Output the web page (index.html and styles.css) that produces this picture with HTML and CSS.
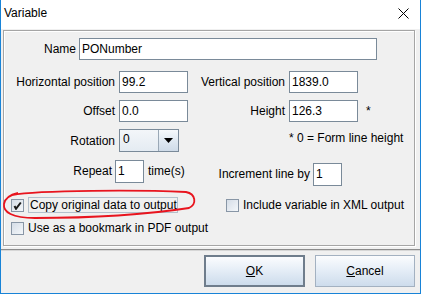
FILE: index.html
```html
<!DOCTYPE html>
<html>
<head>
<meta charset="utf-8">
<link rel="stylesheet" href="styles.css">
</head>
<body>
<div class="window">
  <div class="titlebar">
    <span class="title">Variable</span>
    <svg class="close" width="11" height="11" viewBox="0 0 11 11"><path d="M0.5 0.5 L10.5 10.5 M10.5 0.5 L0.5 10.5" stroke="#000" stroke-width="1" fill="none"/></svg>
  </div>
  <div class="panel">
    <div class="row r1">
      <span class="lbl w-name">Name</span>
      <div class="field f-name">PONumber</div>
    </div>
    <div class="row r2">
      <span class="lbl w1">Horizontal position</span>
      <div class="field f-num">99.2</div>
      <span class="lbl w2">Vertical position</span>
      <div class="field f-num">1839.0</div>
    </div>
    <div class="row r3">
      <span class="lbl w1">Offset</span>
      <div class="field f-num">0.0</div>
      <span class="lbl w2">Height</span>
      <div class="field f-num">126.3</div>
      <span class="star">*</span>
    </div>
    <div class="row r4">
      <span class="lbl w1">Rotation</span>
      <div class="combo">
        <span class="combo-val">0</span>
        <span class="combo-btn"><svg width="9" height="5" viewBox="0 0 9 5"><path d="M0 0 H9 L4.5 5 Z" fill="#000"/></svg></span>
      </div>
      <span class="note">* 0 = Form line height</span>
    </div>
    <div class="row r5">
      <span class="lbl w-rep">Repeat</span>
      <div class="field f-small">1</div>
      <span class="unit">time(s)</span>
      <span class="lbl w-inc">Increment line by</span>
      <div class="field f-small f-inc">1</div>
    </div>
    <div class="row r6">
      <span class="cb cb-first"><svg width="9" height="9" viewBox="0 0 9 9"><path d="M1.5 5 L3 7.8 L7.8 1.5" stroke="#1a1a1a" stroke-width="2" fill="none"/></svg></span>
      <span class="cb-text focus">Copy original data to output</span>
      <span class="cb cb-xml"></span>
      <span class="cb-text">Include variable in XML output</span>
    </div>
    <div class="row r7">
      <span class="cb cb-first"></span>
      <span class="cb-text">Use as a bookmark in PDF output</span>
    </div>
  </div>
  <div class="sep"></div>
  <div class="buttons">
    <button class="btn btn-default"><u>O</u>K</button>
    <button class="btn"><u>C</u>ancel</button>
  </div>
  <svg class="annot" width="421" height="294" viewBox="0 0 421 294"><path d="M12 195 C40 190, 140 190, 186 192 C196 194, 197 204, 189 208 C150 214, 90 218, 35 218 C12 218, 3 212, 4 204 C5 198, 9 195, 18 193" stroke="#e8141e" stroke-width="1.8" fill="none"/></svg>
</div>
</body>
</html>
```
FILE: styles.css
```css
html, body {
  margin: 0;
  padding: 0;
}
body {
  width: 421px;
  height: 294px;
  overflow: hidden;
  font-family: "Liberation Sans", Arial, sans-serif;
  font-size: 12px;
  color: #000;
}
.window {
  position: relative;
  width: 421px;
  height: 294px;
  box-sizing: border-box;
  border-left: 1px solid #1883d7;
  border-right: 1px solid #1883d7;
  border-bottom: 1px solid #1883d7;
  background: #f0f0f0;
}
.titlebar {
  height: 29px;
  background: #fff;
  display: flex;
  align-items: flex-start;
}
.title {
  margin-top: 6px;
  margin-left: 3px;
  line-height: 14px;
  font-size: 12px;
}
.close {
  margin-left: auto;
  margin-top: 8px;
  margin-right: 11px;
}
.panel {
  margin-top: 1px;
  margin-left: 2px;
  width: 412px;
  height: 216px;
  box-sizing: border-box;
  border: 1px solid #a5a5a5;
  box-shadow: inset 1px 1px 0 #fff, 1px 1px 0 #fff;
  padding-top: 7px;
}
.row {
  display: flex;
  align-items: center;
}
.lbl {
  text-align: right;
  white-space: nowrap;
  flex: none;
}
.field {
  flex: none;
  box-sizing: border-box;
  height: 22px;
  line-height: 20px;
  background: #fff;
  border: 1px solid #7a8a99;
  padding-left: 2px;
  white-space: nowrap;
}
.r1 { height: 22px; }
.w-name { width: 72px; margin-right: 3px; }
.f-name { width: 298px; }
.r2 { margin-top: 11px; height: 22px; }
.r3 { margin-top: 7px; height: 22px; }
.w1 { width: 111px; margin-right: 4px; }
.w2 { width: 97px; margin-right: 4px; }
.f-num { width: 69px; }
.star { margin-left: 8px; }
.r4 { margin-top: 7px; height: 23px; }
.combo {
  flex: none;
  display: flex;
  width: 60px;
  height: 23px;
  box-sizing: border-box;
  border: 1px solid #7a8a99;
  background: linear-gradient(#f3f6f9, #e4ebf2);
}
.combo-val {
  flex: 1;
  padding-left: 3px;
  line-height: 19px;
}
.combo-btn {
  width: 19px;
  border-left: 1px solid #9aa8b6;
  display: flex;
  align-items: center;
  justify-content: center;
  background: linear-gradient(#f6f9fc, #dce6f0 60%, #cfdbe8);
}
.note {
  margin-left: 110px;
  margin-top: -6px;
  white-space: nowrap;
}
.r5 { margin-top: 8px; height: 26px; align-items: flex-start; }
.r5 .lbl, .r5 .unit { line-height: 23px; }
.w-rep { width: 108px; margin-right: 3px; }
.f-small { width: 29px; height: 23px; line-height: 21px; }
.unit { width: 40px; margin-left: 4px; flex: none; }
.w-inc { width: 122px; margin-right: 3px; margin-top: 3px; }
.f-inc { margin-top: 3px; }
.r6 { margin-top: 11px; height: 16px; }
.r7 { margin-top: 7px; height: 16px; }
.cb {
  flex: none;
  width: 13px;
  height: 13px;
  box-sizing: border-box;
  border: 1px solid #8896a6;
  background: linear-gradient(135deg, #d5dde7, #f4f7fa);
  display: flex;
  align-items: center;
  justify-content: center;
}
.cb-first { margin-left: 7px; margin-right: 4px; }
.cb-text { white-space: nowrap; }
.focus {
  box-sizing: border-box;
  width: 150px;
  height: 16px;
  line-height: 14px;
  border: 1px solid #b4c0cc;
  padding-left: 1px;
}
.cb-xml { margin-left: 48px; margin-right: 4px; }
.sep {
  margin-top: 3px;
  height: 1px;
  border-top: 1px solid #8c8c8c;
  background: #d6d6d6;
}
.buttons {
  display: flex;
  justify-content: flex-end;
  gap: 10px;
  margin-top: 4px;
  padding-right: 5px;
}
.btn {
  width: 100px;
  height: 32px;
  box-sizing: border-box;
  border: 1px solid #a3b1c1;
  background: linear-gradient(#fbfcfe, #e6eef7 45%, #cddcec);
  font-family: "Liberation Sans", Arial, sans-serif;
  font-size: 12px;
  color: #000;
  padding: 0;
  margin: 0;
}
.btn-default {
  width: 101px;
  border: 2px solid #6f7d8c;
}
.annot {
  position: absolute;
  left: -1px;
  top: 0;
  pointer-events: none;
}
```
